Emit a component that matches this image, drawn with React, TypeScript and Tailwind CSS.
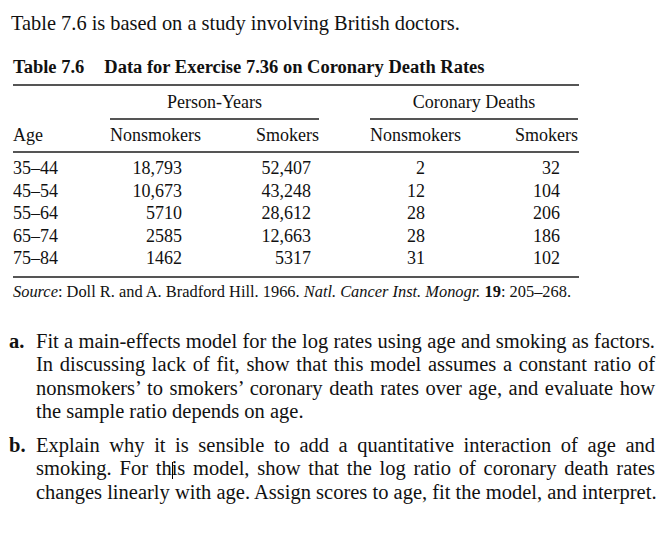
import React from 'react';

const rows = [
  ['35–44', '18,793', '52,407', '2', '32'],
  ['45–54', '10,673', '43,248', '12', '104'],
  ['55–64', '5710', '28,612', '28', '206'],
  ['65–74', '2585', '12,663', '28', '186'],
  ['75–84', '1462', '5317', '31', '102'],
];

const cols = 'grid grid-cols-[97px_127px_82px_51px_120px_88px]';

const Line = ({ children, last = false }: { children: React.ReactNode; last?: boolean }) => (
  <div className={`whitespace-nowrap ${last ? 'text-left' : 'text-justify [text-align-last:justify]'}`}>{children}</div>
);

const App: React.FC = () => {
  return (
    <div className="w-[670px] h-[547px] bg-white text-[#111] font-['Liberation_Serif','Times_New_Roman',serif] overflow-hidden">
      <p className="pl-[11px] pt-[11px] text-[20.4px] leading-[24px]">
        Table 7.6 is based on a study involving British doctors.
      </p>

      {/* table */}
      <div className="ml-[13px] w-[566px] mt-[21px]">
        <div className="text-[18.5px] leading-[22px] font-bold">
          Table 7.6<span className="inline-block w-[20px]" />Data for Exercise 7.36 on Coronary Death Rates
        </div>
        <div className="mt-[6px] border-t-2 border-[#555]" />

        <div className={`${cols} text-[18px] leading-[22px]`}>
          <div />
          <div className="col-span-2 text-center pt-[5px] pb-[5px] border-b-2 border-[#555]">Person-Years</div>
          <div />
          <div className="col-span-2 text-center pt-[5px] pb-[5px] border-b-2 border-[#555]">Coronary Deaths</div>
        </div>

        <div className={`${cols} text-[18px] leading-[22px] pt-[4px] pb-[5px] border-b-2 border-[#555]`}>
          <div>Age</div>
          <div>Nonsmokers</div>
          <div className="text-right">Smokers</div>
          <div />
          <div>Nonsmokers</div>
          <div className="text-right">Smokers</div>
        </div>

        <div className="pt-[4px] pb-[6px] border-b-2 border-[#555] text-[18px] leading-[22.5px]">
          {rows.map((r) => (
            <div key={r[0]} className={cols}>
              <div>{r[0]}</div>
              <div className="text-right pr-[55px]">{r[1]}</div>
              <div className="text-right pr-[8px]">{r[2]}</div>
              <div />
              <div className="text-right pr-[65px]">{r[3]}</div>
              <div className="text-right pr-[18px]">{r[4]}</div>
            </div>
          ))}
        </div>

        <p className="mt-[4px] text-[16.4px] leading-[20px] whitespace-nowrap">
          <i>Source</i>: Doll R. and A. Bradford Hill. 1966. <i>Natl. Cancer Inst. Monogr.</i> <b>19</b>: 205–268.
        </p>
      </div>

      {/* exercises */}
      <div className="mt-[28px] text-[20.5px] leading-[23.5px]">
        <div className="flex">
          <div className="w-[36px] pl-[9px] font-bold shrink-0">a.</div>
          <div className="w-[619px]">
            <Line>Fit a main-effects model for the log rates using age and smoking as factors.</Line>
            <Line>In discussing lack of fit, show that this model assumes a constant ratio of</Line>
            <Line>nonsmokers’ to smokers’ coronary death rates over age, and evaluate how</Line>
            <Line last>the sample ratio depends on age.</Line>
          </div>
        </div>
        <div className="flex mt-[10px]">
          <div className="w-[36px] pl-[9px] font-bold shrink-0">b.</div>
          <div className="w-[619px]">
            <Line>Explain why it is sensible to add a quantitative interaction of age and</Line>
            <Line>
              smoking. For th
              <span className="inline-block w-0 -mr-px h-[17px] border-l border-black align-[-4px]" />
              is model, show that the log ratio of coronary death rates
            </Line>
            <Line last>changes linearly with age. Assign scores to age, fit the model, and interpret.</Line>
          </div>
        </div>
      </div>
    </div>
  );
};

export default App;
